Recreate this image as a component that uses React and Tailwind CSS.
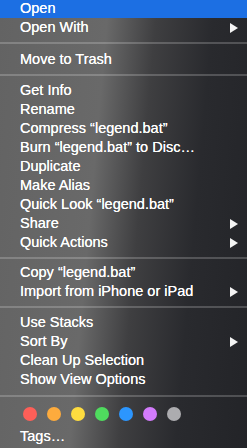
import React from "react";

const groups = [
  [
    { label: "Open", active: true },
    { label: "Open With", sub: true },
  ],
  [{ label: "Move to Trash" }],
  [
    { label: "Get Info" },
    { label: "Rename" },
    { label: "Compress “legend.bat”" },
    { label: "Burn “legend.bat” to Disc…" },
    { label: "Duplicate" },
    { label: "Make Alias" },
    { label: "Quick Look “legend.bat”" },
    { label: "Share", sub: true },
    { label: "Quick Actions", sub: true },
  ],
  [
    { label: "Copy “legend.bat”" },
    { label: "Import from iPhone or iPad", sub: true },
  ],
  [
    { label: "Use Stacks" },
    { label: "Sort By", sub: true },
    { label: "Clean Up Selection" },
    { label: "Show View Options" },
  ],
];

const sepClasses = ["h-[13px] pt-[5px]", "h-[12px] pt-[5px]", "h-[11px] pt-[5px]", "h-[12px] pt-[5px]", "h-[12px] pt-[6px]"];

const tagColors = [
  "bg-[#fe5f58]",
  "bg-[#fdab3d]",
  "bg-[#fedc3f]",
  "bg-[#4fdb5e]",
  "bg-[#2c96fe]",
  "bg-[#d27bfb]",
  "bg-[#acacaf]",
];

const Arrow = () => (
  <svg width="8" height="10" viewBox="0 0 8 10" className="absolute right-[9px] top-[5px]">
    <polygon points="0,0 8,5 0,10" fill="#f4f4f4" />
  </svg>
);

const Item = ({ label, sub, active }) => (
  <div
    className={`relative h-[19px] pl-5 leading-[19px] text-[14.5px] [text-shadow:0_0_0.4px_#fff] ${
      active ? "bg-[#1c6fe3]" : ""
    }`}>
    <span>{label}</span>
    {sub && <Arrow />}
  </div>
);

const Separator = ({ cls }) => (
  <div className={cls}>
    <div className="h-[2px] bg-white/20" />
  </div>
);

export default function App() {
  return (
    <div
      className="w-[247px] h-[448px] overflow-hidden text-white bg-[linear-gradient(95deg,#636363_0%,#696969_38%,#3f3f41_55%,#292a2e_75%,#232428_100%)]"
      style={{ fontFamily: '"Liberation Sans", Arial, sans-serif' }}>
      <div className="mt-[-1px]">
        {groups.map((group, gi) => (
          <React.Fragment key={gi}>
            {group.map((item) => (
              <Item key={item.label} {...item} />
            ))}
            <Separator cls={sepClasses[gi]} />
          </React.Fragment>
        ))}
        <div className="flex items-center gap-[10px] pl-[23px] h-[26px]">
          {tagColors.map((c) => (
            <div key={c} className={`w-[14px] h-[14px] rounded-full ${c}`} />
          ))}
        </div>
        <Item label="Tags…" />
      </div>
    </div>
  );
}
